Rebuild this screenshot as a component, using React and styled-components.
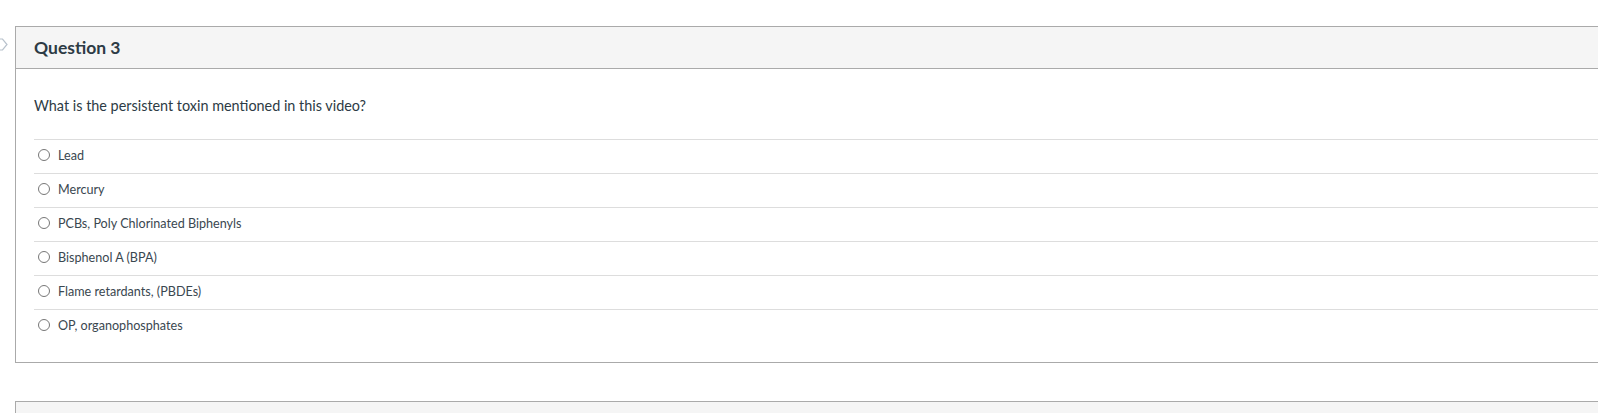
import React from 'react'
import styled, { createGlobalStyle } from 'styled-components'

const GlobalStyle = createGlobalStyle`
  html, body {
    margin: 0;
    padding: 0;
    background: #fff;
    overflow: hidden;
  }
  body {
    font-family: Lato, "Liberation Sans", sans-serif;
    color: #2d3b45;
  }
`

const Page = styled.div`
  padding: 26px 0 0 15px;
  width: 1640px;
`

const Card = styled.div`
  position: relative;
  border: 1px solid #aaa;
  background: #fff;
  margin-bottom: 38px;
`

const Flag = styled.svg`
  position: absolute;
  left: -24px;
  top: 11px;
`

const Header = styled.div`
  height: 41px;
  display: flex;
  align-items: center;
  padding: 0 18px;
  background: #f5f5f5;
  border-bottom: ${p => (p.$open ? '1px solid #aaa' : 'none')};
  font-size: 17.5px;
  font-weight: 700;
`

const Body = styled.div`
  padding: 27px 0 19px 18px;
`

const QuestionText = styled.div`
  font-size: 14.4px;
  line-height: 20px;
  margin-bottom: 23px;
`

const AnswerRow = styled.label`
  display: flex;
  align-items: center;
  gap: 8px;
  height: 30px;
  padding-left: 4px;
  padding-bottom: 3px;
  border-top: 1px solid #ddd;
  font-size: 12.6px;
  color: #3a4750;
`

const Radio = styled.span`
  width: 10px;
  height: 10px;
  border: 1px solid #777;
  border-radius: 50%;
  background: #fff;
  flex: none;
`

const answers = [
  'Lead',
  'Mercury',
  'PCBs, Poly Chlorinated Biphenyls',
  'Bisphenol A (BPA)',
  'Flame retardants, (PBDEs)',
  'OP, organophosphates'
]

export default function App () {
  return (
    <Page>
      <GlobalStyle />
      <Card>
        <Flag width='16' height='13' viewBox='0 0 16 13'>
          <path d='M0 1 H10.5 L15 6.5 L10.5 12 H0' fill='none' stroke='#b8c2cc' strokeWidth='1.2' />
        </Flag>
        <Header $open>Question 3</Header>
        <Body>
          <QuestionText>What is the persistent toxin mentioned in this video?</QuestionText>
          {answers.map(a => (
            <AnswerRow key={a}>
              <Radio />
              {a}
            </AnswerRow>
          ))}
        </Body>
      </Card>
      <Card>
        <Header />
      </Card>
    </Page>
  )
}
